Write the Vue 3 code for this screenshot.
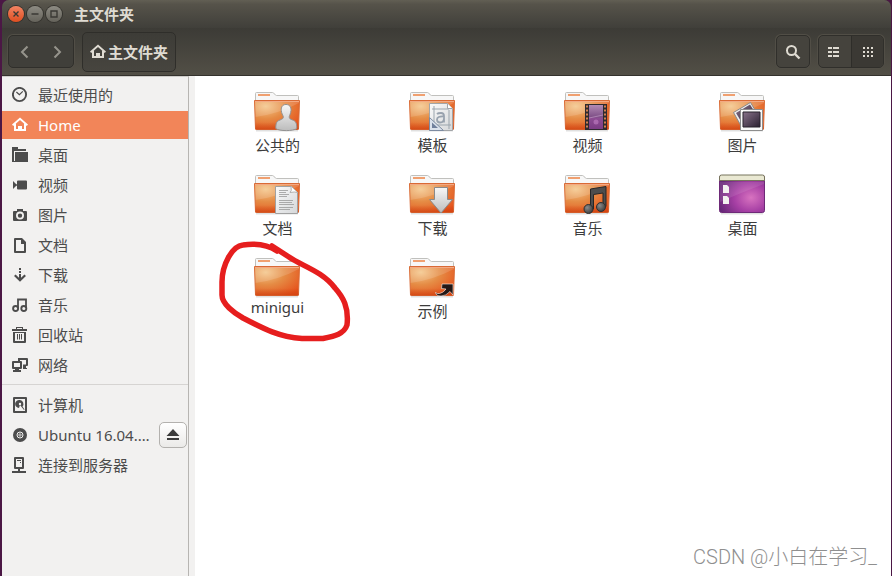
<script setup>
import { ref } from 'vue';

const active = ref('Home');

const places = [
    { name: '最近使用的', icon: 'recent' },
    { name: 'Home', icon: 'home' },
    { name: '桌面', icon: 'desktop' },
    { name: '视频', icon: 'video' },
    { name: '图片', icon: 'camera' },
    { name: '文档', icon: 'document' },
    { name: '下载', icon: 'download' },
    { name: '音乐', icon: 'music' },
    { name: '回收站', icon: 'trash' },
    { name: '网络', icon: 'network' }
];

const devices = [
    { name: '计算机', icon: 'disk' },
    { name: 'Ubuntu 16.04.…', icon: 'disc', eject: true },
    { name: '连接到服务器', icon: 'server' }
];

const files = [
    { name: '公共的', emblem: 'public' },
    { name: '模板', emblem: 'template' },
    { name: '视频', emblem: 'film' },
    { name: '图片', emblem: 'photos' },
    { name: '文档', emblem: 'text' },
    { name: '下载', emblem: 'arrow' },
    { name: '音乐', emblem: 'notes' },
    { name: '桌面', emblem: 'screen' },
    { name: 'minigui', latin: true, marked: true },
    { name: '示例', emblem: 'link' }
];
</script>

<template>
    <svg class="sprite" aria-hidden="true">
        <defs>
            <radialGradient id="folder-fill" cx="0.25" cy="0.2" r="0.95">
                <stop offset="0" stop-color="#f4c68a" />
                <stop offset="0.45" stop-color="#e58c45" />
                <stop offset="1" stop-color="#e6501a" />
            </radialGradient>
            <linearGradient id="folder-shade" x1="0" y1="0" x2="0" y2="1">
                <stop offset="0.75" stop-color="#c93c0c" stop-opacity="0" />
                <stop offset="1" stop-color="#c93c0c" stop-opacity="0.6" />
            </linearGradient>
            <linearGradient id="silver" x1="0" y1="0" x2="0" y2="1">
                <stop offset="0" stop-color="#f8f8f8" />
                <stop offset="1" stop-color="#bcbcbc" />
            </linearGradient>
            <linearGradient id="paper" x1="0" y1="0" x2="1" y2="1">
                <stop offset="0" stop-color="#fafafa" />
                <stop offset="1" stop-color="#d6d8da" />
            </linearGradient>
            <linearGradient id="film-fill" x1="0" y1="0" x2="0" y2="1">
                <stop offset="0" stop-color="#b28bb5" />
                <stop offset="0.5" stop-color="#7e4f86" />
                <stop offset="0.55" stop-color="#8c4c92" />
                <stop offset="1" stop-color="#7c3c84" />
            </linearGradient>
            <linearGradient id="photo-fill" x1="0" y1="0" x2="1" y2="1">
                <stop offset="0" stop-color="#88728a" />
                <stop offset="1" stop-color="#2a2030" />
            </linearGradient>
            <radialGradient id="screen-fill" cx="0.7" cy="0.6" r="0.75">
                <stop offset="0" stop-color="#d873c0" />
                <stop offset="0.5" stop-color="#a63fa4" />
                <stop offset="1" stop-color="#662678" />
            </radialGradient>
            <radialGradient id="note-fill" cx="0.35" cy="0.35" r="0.7">
                <stop offset="0" stop-color="#8c8c8c" />
                <stop offset="1" stop-color="#3c3c3c" />
            </radialGradient>
        </defs>

        <symbol id="icon-recent" viewBox="0 0 16 16">
            <circle cx="7.5" cy="7.5" r="6.6" fill="none" stroke="currentColor" stroke-width="1.9" />
            <path d="M4.4 5 7.4 7.7 10.8 4.4" fill="none" stroke="currentColor" stroke-width="1.2" />
        </symbol>
        <symbol id="icon-home" viewBox="0 0 16 16">
            <path d="M.6 8.2 8 1.8l7.4 6.4" fill="none" stroke="currentColor" stroke-width="1.8" />
            <path d="M3 6.5V13h4v-3h2v3h4V6.5" fill="none" stroke="currentColor" stroke-width="2" />
        </symbol>
        <symbol id="icon-desktop" viewBox="0 0 16 16">
            <path d="M0 0h6v2h8v2H2v10H0z" fill="currentColor" />
            <path d="M3 5h13v10H0v-1h3z" fill="currentColor" />
        </symbol>
        <symbol id="icon-video" viewBox="0 0 16 16">
            <path d="M1 4l4 4-4 4zM6 3.5h8q1 0 1 1v7q0 1-1 1H6q-1 0-1-1v-7q0-1 1-1z" fill="currentColor" />
            <path d="M5 7v2" stroke="currentColor" />
        </symbol>
        <symbol id="icon-camera" viewBox="0 0 16 16">
            <path d="M5 2h6v2h3q1 0 1 1v8q0 1-1 1H2q-1 0-1-1V5q0-1 1-1h3zM8 4.6a4 4 0 1 0 0 8 4 4 0 0 0 0-8zM8 6.4a2.2 2.2 0 1 1 0 4.4 2.2 2.2 0 0 1 0-4.4z" fill="currentColor" fill-rule="evenodd" />
        </symbol>
        <symbol id="icon-document" viewBox="0 0 16 16">
            <path d="M3 1h7l4 4v10q0 1-1 1H3q-1 0-1-1V2q0-1 1-1zM4 3v11h8V7H9V3z" fill="currentColor" fill-rule="evenodd" />
        </symbol>
        <symbol id="icon-download" viewBox="0 0 16 16">
            <path d="M7 1h2v2H7zM7 4h2v2H7zM7 7h2v5H7z" fill="currentColor" />
            <path d="M2.8 8.2 8 13.2l5.2-5" fill="none" stroke="currentColor" stroke-width="2.2" />
        </symbol>
        <symbol id="icon-music" viewBox="0 0 16 16">
            <path d="M6 11V2.5h8V11" fill="none" stroke="currentColor" stroke-width="1.8" />
            <circle cx="3.6" cy="11.5" r="2.5" fill="none" stroke="currentColor" stroke-width="1.9" />
            <circle cx="11.8" cy="11.5" r="2.5" fill="none" stroke="currentColor" stroke-width="1.9" />
        </symbol>
        <symbol id="icon-trash" viewBox="0 0 16 16">
            <path d="M4 0h7v2h4v2H0V2h4zM1 5h13v10q0 1-1 1H2q-1 0-1-1zM3 6v8h9V6z" fill="currentColor" fill-rule="evenodd" />
            <path d="M5.5 7v5.5M7.5 7v5.5M9.5 7v5.5" stroke="currentColor" />
            <path d="M5 1.5h5" stroke="#f2f1f0" />
        </symbol>
        <symbol id="icon-network" viewBox="0 0 16 16">
            <path d="M6 1h9q1 0 1 1v6q0 1-1 1h-1v2h1v1h-4V7.5h3V3H8v1H6z" fill="currentColor" />
            <path d="M1 4h8q1 0 1 1v6q0 1-1 1H7v1h2v2H1v-2h2v-1H1q-1 0-1-1V5q0-1 1-1zM2 6v4h6V6z" fill="currentColor" fill-rule="evenodd" />
        </symbol>
        <symbol id="icon-disk" viewBox="0 0 16 16">
            <path d="M2 0h12q1 0 1 1v14q0 1-1 1H2q-1 0-1-1V1q0-1 1-1zM3 2v12h10V2z" fill="currentColor" fill-rule="evenodd" />
            <path d="M8 3a4 4 0 1 0-1 7.9L8 8l4 5 .5-.5-2-3A4 4 0 0 0 8 3zM8 5.8a1.2 1.2 0 1 1 0 2.4 1.2 1.2 0 0 1 0-2.4z" fill="currentColor" fill-rule="evenodd" />
        </symbol>
        <symbol id="icon-disc" viewBox="0 0 16 16">
            <circle cx="8" cy="8" r="7" fill="currentColor" />
            <circle cx="8" cy="8" r="3" fill="none" stroke="#f2f1f0" stroke-width="1" />
            <circle cx="8" cy="8" r="1.2" fill="none" stroke="#f2f1f0" stroke-width="0.8" />
        </symbol>
        <symbol id="icon-server" viewBox="0 0 16 16">
            <path d="M3 0h8q1 0 1 1v10q0 1-1 1H8v2h6v2H0v-2h6v-2H3q-1 0-1-1V1q0-1 1-1zM4 2v8h6V2z" fill="currentColor" fill-rule="evenodd" />
            <path d="M5 3.5h4M8 5.5h1" stroke="currentColor" />
        </symbol>
    </svg>

    <div class="window">
        <header class="header">
            <div class="titlebar">
                <button class="round close" aria-label="关闭">
                    <svg viewBox="0 0 16 16"><path d="M5.5 5.5l5 5M10.5 5.5l-5 5" /></svg>
                </button>
                <button class="round" aria-label="最小化">
                    <svg viewBox="0 0 16 16"><path d="M4.5 8h7" /></svg>
                </button>
                <button class="round" aria-label="最大化">
                    <svg viewBox="0 0 16 16"><path d="M5 5h6v6H5z" /></svg>
                </button>
                <h1>主文件夹</h1>
            </div>
            <div class="toolbar">
                <div class="group">
                    <button aria-label="后退">
                        <svg viewBox="0 0 16 16"><path d="M10.5 2.5 5 8l5.5 5.5" fill="none" stroke="#96948c" stroke-width="2" /></svg>
                    </button>
                    <button aria-label="前进">
                        <svg viewBox="0 0 16 16"><path d="M5.5 2.5 11 8l-5.5 5.5" fill="none" stroke="#96948c" stroke-width="2" /></svg>
                    </button>
                </div>
                <button class="path">
                    <svg viewBox="0 0 16 16"><use href="#icon-home" /></svg>
                    <span>主文件夹</span>
                </button>
                <div class="group search">
                    <button aria-label="搜索">
                        <svg viewBox="0 0 16 16">
                            <circle cx="6.5" cy="6.5" r="4.5" fill="none" stroke="currentColor" stroke-width="2" />
                            <path d="M10 10l4.5 4.5" stroke="currentColor" stroke-width="2.4" />
                        </svg>
                    </button>
                </div>
                <div class="group views">
                    <button aria-label="列表视图">
                        <svg viewBox="0 0 16 16">
                            <path d="M1 3h4v2H1zM6 3h6v2H6zM1 7h4v2H1zM6 7h6v2H6zM1 11h4v2H1zM6 11h6v2H6z" fill="currentColor" />
                        </svg>
                    </button>
                    <button class="pressed" aria-label="图标视图">
                        <svg viewBox="0 0 16 16">
                            <path d="M3 3h2v2H3zM7 3h2v2H7zM11 3h2v2h-2zM3 7h2v2H3zM7 7h2v2H7zM11 7h2v2h-2zM3 11h2v2H3zM7 11h2v2H7zM11 11h2v2h-2z" fill="currentColor" />
                        </svg>
                    </button>
                </div>
            </div>
        </header>

        <div class="body">
            <nav class="sidebar">
                <ul>
                    <li v-for="place in places" :key="place.name" :class="{ active: active === place.name }">
                        <a href="#" @click.prevent="active = place.name">
                            <svg viewBox="0 0 16 16"><use :href="'#icon-' + place.icon" /></svg>
                            <span>{{ place.name }}</span>
                        </a>
                    </li>
                </ul>
                <ul>
                    <li v-for="device in devices" :key="device.name" :class="{ active: active === device.name }">
                        <a href="#" @click.prevent="active = device.name">
                            <svg viewBox="0 0 16 16"><use :href="'#icon-' + device.icon" /></svg>
                            <span>{{ device.name }}</span>
                        </a>
                        <button v-if="device.eject" class="eject" aria-label="弹出">
                            <svg viewBox="0 0 14 12"><path d="M7 0l6.500 7H.5zM1 9h12v2H1z" fill="#3c3c3c" /></svg>
                        </button>
                    </li>
                </ul>
            </nav>

            <main class="content">
                <div class="files">
                    <a v-for="file in files" :key="file.name" href="#" class="file" @click.prevent>
                        <svg class="folder" viewBox="0 0 48 42">
                            <g v-if="file.emblem === 'screen'">
                                <path d="M3 39.5h42" stroke="#000" stroke-opacity="0.12" stroke-width="2" />
                                <rect x="1.5" y="1.5" width="45" height="37" rx="2" fill="url(#screen-fill)" stroke="#6e2a78" />
                                <path d="M2 28Q20 20 46 10V8H2z" fill="#fff" fill-opacity="0.1" />
                                <path d="M1.5 6.5V3q0-2 2-2h41q2 0 2 2v3.5z" fill="#e9e8d2" stroke="#77745c" />
                                <path d="M5 11h4l2 2v6H5zM5 22h4l2 2v6H5z" fill="#f2f0f0" />
                            </g>
                            <g v-else>
                                <path d="M3 39.5h42" stroke="#000" stroke-opacity="0.12" stroke-width="2" />
                                <path d="M2.5 10V2.5q0-1 1-1h16q1 0 2 1.5t2 1.500h21q1 0 1 1V10z" fill="#f7f7f7" stroke="#c0c0bd" />
                                <path d="M5 4h12" stroke="#f0a070" stroke-width="2" />
                                <path d="M1.5 9.5h45L45.5 38q0 .5-1 .5h-41q-1 0-1-.5z" fill="url(#folder-fill)" stroke="#d96a35" />
                                <path d="M1.5 9.5h45L45.5 38q0 .5-1 .5h-41q-1 0-1-.5z" fill="url(#folder-shade)" />
                                <path d="M2 10.5h44" stroke="#f3a983" />
                                <path d="M2.5 26Q25 23 46 12v-1H2z" fill="#fff" fill-opacity="0.14" />
                            </g>

                            <path v-if="file.emblem === 'public'" d="M33 13.5c-3.5 0-5 2.5-4.7 6 .2 3 1.5 4.5 2 6 .3 2-1 2.6-3.3 3.5-3.5 1.3-4.2 3-4.2 8.5 3 2.8 18 2.8 21 0 0-5.5-.9-7.2-4.3-8.5-2.3-.9-3.5-1.5-3.2-3.5.4-1.5 1.4-3 1.7-6 .3-3.5-1.5-6-5-6z" fill="url(#silver)" stroke="#929292" />
                            <g v-else-if="file.emblem === 'template'">
                                <path d="M21.5 12.5h18l5 5v22h-23z" fill="url(#paper)" stroke="#a2a5a8" />
                                <path d="M39.5 12.5v5h5" fill="#fff" stroke="#a2a5a8" />
                                <path d="M26 15v23M41 19v19M24 18h17M24 34h19" stroke="#9ba5ad" />
                                <path d="M36 29v-4q0-3-3-3t-4 1M36 25.5q-7-.5-7 3 0 3 3 3 4 0 4-4v4" fill="none" stroke="#98a2ae" stroke-width="1.8" />
                                <path d="M21.5 26.5l14 13h-14z" fill="#dbe2ec" stroke="#7d8ba1" />
                                <path d="M24 31.5l6 5.5h-6z" fill="#70809c" />
                            </g>
                            <g v-else-if="file.emblem === 'film'">
                                <path d="M22 13h22v26H22z" fill="#2e2a2e" />
                                <path d="M26 14h14v24H26z" fill="url(#film-fill)" />
                                <path d="M24 14.5v24M42 14.5v24" stroke="#d08050" stroke-width="2" stroke-dasharray="2 2" />
                                <path d="M26 27l14-3" stroke="#c8a4cc" stroke-opacity="0.6" />
                                <circle cx="33" cy="31" r="2.5" fill="#c381c4" fill-opacity="0.6" />
                            </g>
                            <g v-else-if="file.emblem === 'photos'">
                                <path d="M15.5 21.5l17-10 9 15-17 11z" fill="#eee" stroke="#8a8a8a" />
                                <path d="M18 22l14-8.5 7 11-14 9z" fill="url(#photo-fill)" />
                                <path d="M22.5 18.5h22v21h-22z" fill="#fafafa" stroke="#8d8d8d" />
                                <path d="M25 21h17v15H25z" fill="url(#photo-fill)" stroke="#29222c" />
                            </g>
                            <g v-else-if="file.emblem === 'text'">
                                <path d="M22.5 12.5h16l6 6v21h-22z" fill="url(#paper)" stroke="#a1a1a1" />
                                <path d="M38 12.5q1 5-1 6 5-1 7.5 0" fill="#fff" stroke="#b0b0b0" />
                                <path d="M26 16.5h9M26 18.5h7M26 20.5h10M26 22.5h8M26 26.5h14M26 28.5h13M26 30.5h15M26 33.5h14M26 35.5h11" stroke="#9a9a9a" stroke-opacity="0.8" />
                            </g>
                            <path v-else-if="file.emblem === 'arrow'" d="M26.5 13.5h13v12h5L33 39 21.5 25.5h5z" fill="url(#silver)" stroke="#8a8a8a" />
                            <g v-else-if="file.emblem === 'notes'">
                                <path d="M27.5 35V15L43 12.5v20h-3V19l-9.5 1.5V35z" fill="#4d4d4d" stroke="#272727" />
                                <circle cx="25.5" cy="35" r="4.5" fill="url(#note-fill)" stroke="#303030" />
                                <circle cx="38" cy="33" r="4.5" fill="url(#note-fill)" stroke="#303030" />
                            </g>
                            <path v-else-if="file.emblem === 'link'" d="M27.5 35.5q1.5 1.5 4 1 4-.7 6.500-4.500l-4.500-.5.5-4.500h11v11l-3-3.500q-4 4.500-9 4.500-5 0-5.500-3.500z" fill="#231816" stroke="#fff" stroke-opacity="0.7" stroke-width="0.8" />
                        </svg>
                        <span :class="{ latin: file.latin }">{{ file.name }}</span>
                        <svg v-if="file.marked" class="mark" viewBox="0 0 150 115">
                            <path d="M67 16C58 10 47 8 33 10 22 11 12 30 12 47V60C12 69 24 78 33 83 54 94 70 102 92 103.5H113C125 101 134 99 137 90 139 72 133 62 125 53 112 36 92 31 79 22L62 11" />
                        </svg>
                    </a>
                </div>
                <p class="watermark">CSDN @小白在学习_</p>
            </main>
        </div>
    </div>
</template>

<style>
body{
    background-color: #4b1745;
}
</style>

<style scoped>
.sprite{
    position: absolute;
    width: 0;
    height: 0;
}

.window{
    min-height: 100vh;
    box-sizing: border-box;
    padding: 0 1px 0 2px;
    display: flex;
    flex-direction: column;
    font-family: "Noto Sans", "Noto Sans CJK SC", sans-serif;
    font-size: 15px;
    color: #4c4c4c;
}
button{
    border: 0;
    padding: 0;
    background: none;
    font: inherit;
    color: inherit;
    display: flex;
    align-items: center;
    justify-content: center;
}
a{
    color: inherit;
    text-decoration: none;
}

/* header */
.header{
    border-radius: 7px 7px 0 0;
    border-bottom: 1px solid #34322d;
    overflow: hidden;
    color: #dfdbd2;
    background-color: #3c3b37;
}
.titlebar{
    height: 28px;
    box-sizing: border-box;
    padding: 0 6px 1px;
    display: flex;
    align-items: center;
    gap: 3px;
    background: linear-gradient(#625f54, #56534a 15%, #403f3a);
}
.titlebar h1{
    margin: 0 9px;
    font-size: 15px;
    font-weight: 700;
    line-height: 24px;
}
.round{
    width: 16px;
    height: 16px;
    border-radius: 50%;
    background: linear-gradient(#8d8b83, #65635b);
    box-shadow: 0 0 0 1px #34332e;
}
.round svg{
    width: 16px;
    height: 16px;
    fill: none;
    stroke: #3a3934;
    stroke-width: 1.4;
}
.round.close{
    background: linear-gradient(#f38463, #de4e20);
}
.toolbar{
    height: 47px;
    box-sizing: border-box;
    padding: 0 7px 0 6px;
    display: flex;
    align-items: center;
    gap: 8px;
    background: linear-gradient(#3c3b36, #524f46);
}
.toolbar svg{
    width: 16px;
    height: 16px;
}
.group{
    display: flex;
    border: 1px solid #302f2b;
    border-radius: 5px;
    background-color: #403f3a;
    box-shadow: 0 0 0 1px #514e46;
    overflow: hidden;
}
.group button{
    width: 32px;
    height: 31px;
}
.search{
    margin-left: auto;
    background-color: #45433d;
}
.views{
    background-color: #45433d;
}
.views .pressed{
    background-color: #3b3934;
    border-left: 1px solid #2e2d29;
}
.path{
    height: 40px;
    padding: 0 7px;
    gap: 2px;
    border: 1px solid #2f2e2a;
    border-radius: 5px;
    background: linear-gradient(#3d3c37, #47453f);
    font-weight: 700;
}

/* sidebar */
.body{
    flex: 1;
    display: flex;
    background-color: #f2f1f0;
}
.sidebar{
    width: 186px;
    border-right: 1px solid #b7b5b2;
    border-top: 1px solid #d0cecb;
}
.sidebar ul{
    margin: 0;
    padding: 4px 0 5px;
    list-style: none;
    display: flex;
    flex-direction: column;
    gap: 2px;
}
.sidebar ul + ul{
    border-top: 1px solid #d6d4d2;
    padding-top: 6px;
}
.sidebar li{
    height: 28px;
    padding: 0 1px 0 10px;
    display: flex;
    align-items: center;
}
.sidebar li.active{
    background-color: #f28559;
    color: #ffffff;
}
.sidebar a{
    flex: 1;
    min-width: 0;
    display: flex;
    align-items: center;
    gap: 10px;
    white-space: nowrap;
    line-height: 28px;
}
.sidebar a svg{
    flex: none;
    width: 16px;
    height: 16px;
}
.eject{
    width: 28px;
    height: 26px;
    border: 1px solid #b3b1ae;
    border-radius: 5px;
    background: linear-gradient(#ffffff, #ebeae8);
}
.eject svg{
    width: 14px;
    height: 12px;
}

/* files */
.content{
    flex: 1;
    position: relative;
    margin-left: 6px;
    padding: 15px 4px;
    background-color: #ffffff;
}
.files{
    display: grid;
    grid-template-columns: repeat(auto-fill, 155px);
    row-gap: 17px;
}
.file{
    position: relative;
    display: flex;
    flex-direction: column;
    align-items: center;
    height: 66px;
    line-height: 24px;
    color: #3c3c3c;
}
.file span{
    padding-left: 2px;
}
.folder{
    width: 48px;
    height: 42px;
}
.file .latin{
    line-height: 16px;
}
.mark{
    position: absolute;
    left: 11px;
    top: -22px;
    width: 150px;
    height: 115px;
    fill: none;
    stroke: #e61e1e;
    stroke-width: 5.5;
    stroke-linecap: round;
    stroke-linejoin: round;
}
.watermark{
    position: absolute;
    right: 14px;
    bottom: 4px;
    margin: 0;
    font-family: Roboto, "Noto Sans CJK SC", sans-serif;
    font-size: 20px;
    font-weight: 300;
    line-height: 30px;
    color: #8f8f8f;
}
</style>
